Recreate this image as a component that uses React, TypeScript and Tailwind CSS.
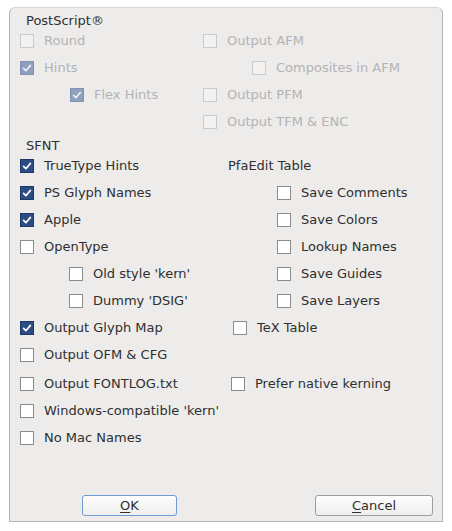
import React from "react";

type CBProps = { checked?: boolean; disabled?: boolean };

function Box({ checked = false, disabled = false }: CBProps) {
  let cls = "bg-white border-[#8c8c8c]";
  if (disabled && checked) cls = "bg-[#8fa0be] border-[#8193b3]";
  else if (disabled) cls = "bg-[#f3f2f1] border-[#cbcbcb]";
  else if (checked) cls = "bg-[#2c4d84] border-[#1e3865]";
  return (
    <div className={`w-[14px] h-[14px] border shrink-0 flex items-center justify-center ${cls}`}>
      {checked && (
        <svg width="12" height="12" viewBox="0 0 12 12">
          <path
            d="M2.6 6.4 L4.9 8.7 L9.4 3.4"
            fill="none"
            stroke={disabled ? "#e9edf4" : "#ffffff"}
            strokeWidth="1.7"
            strokeLinecap="round"
            strokeLinejoin="round"
          />
        </svg>
      )}
    </div>
  );
}

function Check({
  label,
  checked,
  disabled,
  className = "",
}: CBProps & { label: string; className?: string }) {
  return (
    <div className={`flex items-center gap-[10px] ${className}`}>
      <Box checked={checked} disabled={disabled} />
      <span className={`whitespace-nowrap leading-[16px] ${disabled ? "text-[#b3b3b3]" : "text-[#2f2f2f]"}`}>
        {label}
      </span>
    </div>
  );
}

function Row({
  left,
  right,
  className = "",
}: {
  left?: React.ReactNode;
  right?: React.ReactNode;
  className?: string;
}) {
  return (
    <div className={`flex h-[27px] items-center ${className}`}>
      <div className="w-[183px] shrink-0 flex items-center">{left}</div>
      <div className="flex items-center">{right}</div>
    </div>
  );
}

export default function App() {
  return (
    <div className="w-[452px] h-[531px] bg-white pt-[7px] pl-[9px] font-['DejaVu_Sans',sans-serif] text-[13px]">
      <div className="w-[434px] h-[515px] bg-[#edeceb] border border-[#b4b4b4] border-t-[#d6d6d6] rounded-t-[6px] flex flex-col">
        <div className="pt-[6px]">
          <div className="h-[13px] leading-[13px] pl-[16px] text-[#2f2f2f]">PostScript®</div>
          <Row
            left={<Check className="ml-[10px]" label="Round" disabled />}
            right={<Check className="ml-[10px]" label="Output AFM" disabled />}
          />
          <Row
            left={<Check className="ml-[10px]" label="Hints" checked disabled />}
            right={<Check className="ml-[59px]" label="Composites in AFM" disabled />}
          />
          <Row
            left={<Check className="ml-[60px]" label="Flex Hints" checked disabled />}
            right={<Check className="ml-[10px]" label="Output PFM" disabled />}
          />
          <Row right={<Check className="ml-[10px]" label="Output TFM & ENC" disabled />} />

          <div className="mt-[5px] h-[12px] leading-[12px] pl-[16px] text-[#2f2f2f]">SFNT</div>
          <Row
            left={<Check className="ml-[10px]" label="TrueType Hints" checked />}
            right={<span className="ml-[35px] text-[#2f2f2f] whitespace-nowrap">PfaEdit Table</span>}
          />
          <Row
            left={<Check className="ml-[10px]" label="PS Glyph Names" checked />}
            right={<Check className="ml-[84px]" label="Save Comments" />}
          />
          <Row
            left={<Check className="ml-[10px]" label="Apple" checked />}
            right={<Check className="ml-[84px]" label="Save Colors" />}
          />
          <Row
            left={<Check className="ml-[10px]" label="OpenType" />}
            right={<Check className="ml-[84px]" label="Lookup Names" />}
          />
          <Row
            left={<Check className="ml-[59px]" label="Old style 'kern'" />}
            right={<Check className="ml-[84px]" label="Save Guides" />}
          />
          <Row
            left={<Check className="ml-[59px]" label="Dummy 'DSIG'" />}
            right={<Check className="ml-[84px]" label="Save Layers" />}
          />
          <Row
            left={<Check className="ml-[10px]" label="Output Glyph Map" checked />}
            right={<Check className="ml-[40px]" label="TeX Table" />}
          />
          <Row left={<Check className="ml-[10px]" label="Output OFM & CFG" />} />
          <Row
            className="mt-[2px]"
            left={<Check className="ml-[10px]" label="Output FONTLOG.txt" />}
            right={<Check className="ml-[38px]" label="Prefer native kerning" />}
          />
          <Row left={<Check className="ml-[10px]" label="Windows-compatible 'kern'" />} />
          <Row left={<Check className="ml-[10px]" label="No Mac Names" />} />
        </div>

        <div className="mt-auto pb-[5px] flex items-center">
          <button className="ml-[72px] w-[95px] h-[21px] rounded-[3px] border border-[#6f9ad3] bg-gradient-to-b from-[#fdfdfd] to-[#efefee] text-[#2f2f2f] leading-[16px]">
            <span className="underline underline-offset-2">O</span>K
          </button>
          <button className="ml-[138px] w-[118px] h-[21px] rounded-[3px] border border-[#9d9d9d] bg-gradient-to-b from-[#fdfdfd] to-[#efefee] text-[#2f2f2f] leading-[16px]">
            <span className="underline underline-offset-2">C</span>ancel
          </button>
        </div>
      </div>
    </div>
  );
}
